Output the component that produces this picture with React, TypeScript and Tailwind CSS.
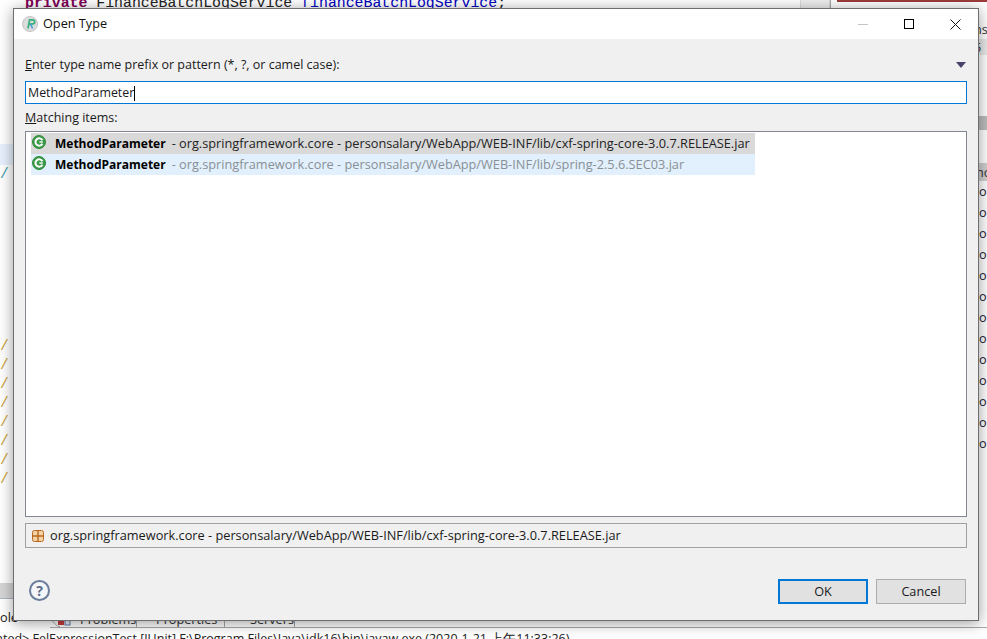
const ui = { fontFamily: '"Open Sans", "Noto Sans", sans-serif' };

function LeftGutter() {
  const slashes = [0, 1, 2, 3, 4, 5, 6, 7];
  return (
    <div className="w-[13px] flex flex-col shrink-0 h-full">
      <div className="h-[144px]" />
      <div className="h-[21px] bg-[#e8f2fe]" />
      <div className="h-[1px]" />
      <div className="h-[16px] text-[14.7px] leading-[16px] text-[#3f9fa8] font-['Liberation_Mono',monospace]">/</div>
      <div className="h-[156px]" />
      <div className="flex flex-col gap-[3px]">
        {slashes.map((i) => (
          <div key={i} className="h-[16px] text-[14.7px] leading-[16px] text-[#c9a23a] font-['Liberation_Mono',monospace]">
            /
          </div>
        ))}
      </div>
      <div className="h-[96px]" />
      <div className="h-[15px] bg-[#d6d6d6]" />
      <div className="h-[1px] bg-[#b0b8c8]" />
      <div className="h-[10px]" />
      <div className="h-[8px] text-[12.7px] leading-[16px] text-[#222] whitespace-pre">ole</div>
    </div>
  );
}

function RightPanel() {
  const rows = Array.from({ length: 13 });
  return (
    <div className="flex flex-col border-l border-[#a8a8a8] h-full">
      <div className="h-[2px] ml-[6px] bg-[#9c3c3c]" />
      <div className="h-[19px]" />
      <div className="pl-[143px] text-[12.7px] leading-[16px] text-[#333]">ns</div>
      <div className="h-[2px]" />
      <div className="pl-[143px] text-[12.7px] leading-[16px] text-[#333] bg-[#e9e9e9]">5</div>
      <div className="h-[61px]" />
      <div className="h-[14px] bg-[#bdbdbd]" />
      <div className="h-[33px]" />
      <div className="pl-[145px] h-[18px] text-[12.7px] leading-[18px] text-[#333] bg-[#d0d0d0]">ho</div>
      <div className="flex flex-col gap-[5px] pt-[2px]">
        {rows.map((_, i) => (
          <div key={i} className="pl-[148px] h-[16px] text-[12.7px] leading-[16px] text-[#223]">
            o
          </div>
        ))}
      </div>
    </div>
  );
}

function ClassIcon() {
  return (
    <svg width="14" height="14" viewBox="0 0 14 14" className="shrink-0 mt-[-3px]">
      <circle cx="7" cy="7" r="6.5" fill="#3b9a48" stroke="#2f8a3c" />
      <path d="M10.4 5.2A3.7 3.7 0 1 0 10.4 8.8" fill="none" stroke="#fff" strokeWidth="2" />
      <path d="M7.4 7h3.4" stroke="#fff" strokeWidth="1.4" />
    </svg>
  );
}

function PackageIcon() {
  return (
    <svg width="12" height="12" viewBox="0 0 12 12" className="shrink-0">
      <rect x="0.5" y="0.5" width="11" height="11" rx="2" fill="#f6d3a6" stroke="#b8691f" />
      <path d="M6 1v10M1 6h10" stroke="#b8691f" strokeWidth="1.4" />
    </svg>
  );
}

function AppIcon() {
  return (
    <svg width="16" height="16" viewBox="0 0 16 16" className="shrink-0">
      <circle cx="8" cy="8" r="7.5" fill="#dcdcdc" stroke="#c4c4c4" />
      <path d="M6 12.5L7.6 3.8h3a2 2 0 0 1 .2 4l-3.4.3" fill="none" stroke="#35b07a" strokeWidth="1.7" />
      <path d="M8.6 8.2l2 4.3" fill="none" stroke="#4a9fd8" strokeWidth="1.7" />
    </svg>
  );
}

function ResultRow({ pkg, selected }: { pkg: string; selected: boolean }) {
  return (
    <div className={`h-[21px] flex items-center pl-[1px] ${selected ? "bg-[#d9d9d9]" : "bg-[#e1f0fc]"}`}>
      <ClassIcon />
      <span className="ml-[9px] text-[12px] font-bold text-black">MethodParameter</span>
      <span className={`ml-[6px] text-[12.75px] whitespace-pre ${selected ? "text-[#222]" : "text-[#8a8f96]"}`}>{pkg}</span>
    </div>
  );
}

function OpenTypeDialog() {
  return (
    <div
      style={ui}
      className="absolute left-[13px] top-[8px] w-[966px] h-[613px] flex flex-col bg-[#f0f0f0] border border-[#6e6e6e] shadow-[0_2px_14px_rgba(0,0,0,0.4)] text-[12.5px] text-[#1a1a1a]"
    >
      <div className="h-[30px] bg-white flex items-center shrink-0">
        <div className="ml-[8px]">
          <AppIcon />
        </div>
        <span className="ml-[5px] text-[12.7px] text-[#111]">Open Type</span>
        <div className="flex-1" />
        <div className="w-[46px] flex justify-center">
          <div className="w-[10px] h-[1px] bg-[#c4c4c4]" />
        </div>
        <div className="w-[46px] flex justify-center">
          <div className="w-[10px] h-[10px] border border-black" />
        </div>
        <div className="w-[46px] flex justify-center">
          <svg width="11" height="11" viewBox="0 0 11 11">
            <path d="M0.5 0.5l10 10M10.5 0.5l-10 10" stroke="#111" strokeWidth="1" />
          </svg>
        </div>
      </div>

      <div className="flex-1 flex flex-col pl-[11px] pr-[11px] min-h-0">
        <div className="mt-[17px] h-[16px] flex items-center justify-between">
          <span className="leading-[18px] pt-[2px]">
            <span className="underline">E</span>nter type name prefix or pattern (*, ?, or camel case):
          </span>
          <svg width="10" height="6" viewBox="0 0 10 6" className="mr-[1px] mt-[2px]">
            <path d="M0 0h10L5 6z" fill="#45436b" />
          </svg>
        </div>
        <div className="mt-[9px] h-[23px] bg-white border border-[#0078d7] flex items-center pl-[2px] pt-[1px] text-[12.4px] shrink-0">
          MethodParameter
          <span className="w-[1px] h-[15px] bg-black" />
        </div>
        <div className="mt-[6px] h-[16px] leading-[16px]">
          <span className="underline">M</span>atching items:
        </div>
        <div className="mt-[5px] flex-1 min-h-0 bg-white border border-[#828790] pt-[1px] pl-[5px]">
          <div className="w-[724px]">
            <ResultRow selected pkg="- org.springframework.core - personsalary/WebApp/WEB-INF/lib/cxf-spring-core-3.0.7.RELEASE.jar" />
            <ResultRow selected={false} pkg="- org.springframework.core - personsalary/WebApp/WEB-INF/lib/spring-2.5.6.SEC03.jar" />
          </div>
        </div>
        <div className="mt-[6px] h-[25px] border border-[#a0a0a0] flex items-center pl-[6px] gap-[6px] shrink-0 text-[12.75px]">
          <PackageIcon />
          <span>org.springframework.core - personsalary/WebApp/WEB-INF/lib/cxf-spring-core-3.0.7.RELEASE.jar</span>
        </div>
        <div className="h-[72px] flex items-start shrink-0">
          <div className="mt-[32px] ml-[4px] w-[21px] h-[21px] rounded-full border-2 border-[#6b7d99] bg-[#f4f6fa] flex items-center justify-center text-[14px] font-bold text-[#5a6c8a] leading-none">
            ?
          </div>
          <div className="flex-1" />
          <button className="mt-[31px] w-[90px] h-[25px] bg-[#e1e1e1] border-2 border-[#0078d7] text-[12.7px]">OK</button>
          <button className="mt-[31px] ml-[8px] mr-[1px] w-[90px] h-[25px] bg-[#e1e1e1] border border-[#adadad] text-[12.7px]">Cancel</button>
        </div>
      </div>
    </div>
  );
}

export default function App() {
  return (
    <div style={ui} className="relative w-[987px] h-[639px] overflow-hidden bg-white flex flex-col">
      <div className="flex flex-1 min-h-0">
        <LeftGutter />
        <div className="flex-1 min-w-0 font-['Liberation_Mono',monospace] text-[14.85px] leading-[16px] whitespace-pre pl-[12px] mt-[-5px] text-[#222]">
          <span className="font-bold text-[#7f0055]">private</span> FinanceBatchLogService <span className="text-[#0000c0]">financeBatchLogService</span>;
        </div>
        <div className="w-[30px] bg-[#efefef] border-x border-[#dcdcdc] shrink-0" />
        <div className="w-[157px] shrink-0">
          <RightPanel />
        </div>
      </div>
      <div className="h-[22px] shrink-0 flex flex-col">
        <div className="h-[11px] flex text-[12.7px] leading-[4px] text-[#333]">
          <div className="w-[50px]" />
          <div className="w-[87px] border-b border-r border-[#a8a8a8] flex">
            <svg width="22" height="10" viewBox="0 0 22 10" className="shrink-0">
              <path d="M0 2c3 1 5 7 10 8" fill="none" stroke="#a8a8a8" />
              <rect x="8" y="3" width="6" height="5" fill="#c93a3a" />
              <rect x="15" y="3" width="5" height="5" fill="#e8eef8" stroke="#5a78a8" />
            </svg>
            <span className="ml-[8px] overflow-hidden">Problems</span>
          </div>
          <div className="w-[88px] border-b border-r border-[#a8a8a8] pl-[8px] flex gap-[3px] overflow-hidden">
            <div className="w-[8px] h-[4px] bg-[#c8c8c8] border border-[#777] shrink-0" />
            <span>Properties</span>
          </div>
          <div className="w-[70px] border-b border-r border-[#a8a8a8] pl-[25px] overflow-hidden">Servers</div>
          <div className="flex-1 border-b border-[#a8a8a8]" />
        </div>
        <div className="text-[12.5px] leading-[16px] text-[#222] whitespace-pre mt-[3px] ml-[-4px]">
          {"ated> FelExpressionTest [JUnit] F:\\Program Files\\Java\\jdk16\\bin\\javaw.exe (2020-1-21 上午11:33:26)"}
        </div>
      </div>
      <OpenTypeDialog />
    </div>
  );
}
